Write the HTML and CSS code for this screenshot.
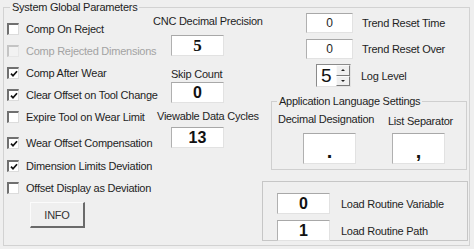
FILE: index.html
```html
<!DOCTYPE html>
<html>
<head>
<meta charset="utf-8">
<link rel="stylesheet" href="styles.css">
</head>
<body>
<div class="main">
  <div class="legend">System Global Parameters</div>
  <div class="cols">
    <div class="col1">
      <div class="cb r1"><span class="box"></span><span>Comp On Reject</span></div>
      <div class="cb disabled"><span class="box"></span><span>Comp Rejected Dimensions</span></div>
      <div class="cb"><span class="box"><svg viewBox="0 0 8 8" class="chk"><polyline points="1,3.6 3,5.8 7,1.2"/></svg></span><span>Comp After Wear</span></div>
      <div class="cb"><span class="box"><svg viewBox="0 0 8 8" class="chk"><polyline points="1,3.6 3,5.8 7,1.2"/></svg></span><span>Clear Offset on Tool Change</span></div>
      <div class="cb"><span class="box"></span><span>Expire Tool on Wear Limit</span></div>
      <div class="cb r6"><span class="box"><svg viewBox="0 0 8 8" class="chk"><polyline points="1,3.6 3,5.8 7,1.2"/></svg></span><span>Wear Offset Compensation</span></div>
      <div class="cb r7"><span class="box"><svg viewBox="0 0 8 8" class="chk"><polyline points="1,3.6 3,5.8 7,1.2"/></svg></span><span>Dimension Limits Deviation</span></div>
      <div class="cb"><span class="box"></span><span>Offset Display as Deviation</span></div>
      <div class="btn">INFO</div>
    </div>
    <div class="col2">
      <div class="lbl l-cnc">CNC Decimal Precision</div>
      <div class="tb big b1 serif">5</div>
      <div class="lbl l-skip">Skip Count</div>
      <div class="tb big b2">0</div>
      <div class="lbl l-view">Viewable Data Cycles</div>
      <div class="tb big b3">13</div>
    </div>
    <div class="col3">
      <div class="row t1"><div class="tb small">0</div><span class="rl">Trend Reset Time</span></div>
      <div class="row t2"><div class="tb small">0</div><span class="rl">Trend Reset Over</span></div>
      <div class="row t3">
        <div class="spin">
          <div class="spin-val">5</div>
          <div class="spin-btns">
            <div class="sb"><span class="up"></span></div>
            <div class="sb"><span class="down"></span></div>
          </div>
        </div>
        <span class="rl ll">Log Level</span>
      </div>
      <div class="lang">
        <div class="legend lg2">Application Language Settings</div>
        <div class="langcols">
          <div class="lc lca">
            <div class="lbl la">Decimal Designation</div>
            <div class="tb sep sa">.</div>
          </div>
          <div class="lc lcb">
            <div class="lbl lb">List Separator</div>
            <div class="tb sep sbx">,</div>
          </div>
        </div>
      </div>
      <div class="load">
        <div class="row"><div class="tb mid">0</div><span class="lr">Load Routine Variable</span></div>
        <div class="row lr2"><div class="tb mid">1</div><span class="lr">Load Routine Path</span></div>
      </div>
    </div>
  </div>
</div>
</body>
</html>
```
FILE: styles.css
```css
* { box-sizing: border-box; }
html, body { margin: 0; padding: 0; }
body {
  width: 474px;
  height: 249px;
  overflow: hidden;
  background: #efefef;
  font-family: "Liberation Sans", Arial, sans-serif;
  font-size: 11px;
  letter-spacing: -0.25px;
  color: #1e1e1e;
}
.main {
  margin: 7px 0 0 3px;
  width: 467px;
  height: 239px;
  border: 1px solid #d2d2d2;
  display: flex;
  flex-direction: column;
}
.legend {
  align-self: flex-start;
  margin: -8px 0 0 6px;
  padding: 0 2px;
  background: #efefef;
  line-height: 14px;
  white-space: nowrap;
}
.cols { display: flex; flex: 1; }
.col1 {
  width: 149px;
  flex: none;
  padding-left: 3px;
  display: flex;
  flex-direction: column;
  white-space: nowrap;
}
.cb { display: flex; align-items: center; height: 22px; }
.cb.r1 { margin-top: 4px; }
.cb.r6 { margin-top: 4px; }
.cb.r7 { margin-top: 1px; }
.cb .box {
  width: 12px;
  height: 12px;
  flex: none;
  margin-right: 7px;
  background: #fff;
  border-style: solid;
  border-width: 2px 1px 1px 2px;
  border-color: #707070 #dcdcdc #dcdcdc #707070;
  display: flex;
  align-items: center;
  justify-content: center;
}
.cb.disabled { color: #a3a3a3; }
.cb.disabled .box { background: #f2f2f2; border-color: #c4c4c4 #e6e6e6 #e6e6e6 #c4c4c4; }
.chk { width: 8px; height: 8px; }
.chk polyline { fill: none; stroke: #111; stroke-width: 1.7; }
.btn {
  margin: 3px 0 0 23px;
  width: 55px;
  height: 26px;
  border-style: solid;
  border-width: 1px 2px 2px 1px;
  border-color: #fbfbfb #6a6a6a #6a6a6a #fbfbfb;
  background: #efefef;
  display: flex;
  align-items: center;
  justify-content: center;
  color: #333;
}
.col2 {
  width: 109px;
  flex: none;
  display: flex;
  flex-direction: column;
  white-space: nowrap;
}
.lbl { line-height: 14px; white-space: nowrap; }
.tb {
  background: #fff;
  border-style: solid;
  border-width: 1px;
  border-color: #a8a8a8 #e2e2e2 #e2e2e2 #b0b0b0;
  display: flex;
  align-items: center;
  justify-content: center;
}
.big { width: 53px; height: 21px; font-weight: bold; font-size: 16px; letter-spacing: 0; color: #111; }
.serif { font-family: "Liberation Serif", "Times New Roman", serif; font-size: 17px; }
.l-cnc { margin-top: 0; }
.b1 { margin: 7px 0 0 18px; }
.l-skip { margin: 11px 0 0 18px; }
.b2 { margin: 1px 0 0 18px; }
.l-view { margin: 6px 0 0 4px; }
.b3 { margin: 4px 0 0 18px; }
.col3 { flex: 1; display: flex; flex-direction: column; }
.row { display: flex; align-items: center; white-space: nowrap; }
.small { width: 47px; height: 20px; margin-left: 44px; font-size: 12px; letter-spacing: 0; }
.rl { margin-left: 9px; }
.t1 { margin-top: -1px; }
.t2 { margin-top: 6px; }
.t3 { margin-top: 5px; }
.spin {
  margin-left: 54px;
  width: 35px;
  height: 23px;
  display: flex;
  background: #fff;
  border-style: solid;
  border-width: 1px;
  border-color: #8a8a8a #e2e2e2 #e2e2e2 #8a8a8a;
}
.spin-val { flex: 1; font-size: 19px; line-height: 21px; padding-left: 4px; letter-spacing: 0; color: #111; }
.spin-btns { width: 14px; display: flex; flex-direction: column; }
.sb {
  flex: 1;
  background: #efefef;
  border-style: solid;
  border-width: 1px;
  border-color: #fafafa #7a7a7a #7a7a7a #fafafa;
  display: flex;
  align-items: center;
  justify-content: center;
}
.up { width: 0; height: 0; border-left: 2px solid transparent; border-right: 2px solid transparent; border-bottom: 2px solid #222; }
.down { width: 0; height: 0; border-left: 2px solid transparent; border-right: 2px solid transparent; border-top: 2px solid #222; }
.ll { margin-left: 10px; }
.lang {
  margin: 14px 0 0 9px;
  width: 196px;
  height: 69px;
  border: 1px solid #cfcfcf;
  display: flex;
  flex-direction: column;
}
.lg2 { margin-left: 5px; }
.langcols { display: flex; padding-left: 6px; }
.lca { width: 110px; flex: none; display: flex; flex-direction: column; }
.lcb { display: flex; flex-direction: column; }
.la { margin-top: 4px; }
.lb { margin-top: 6px; }
.sep {
  width: 53px;
  height: 31px;
  font-weight: bold;
  font-size: 20px;
  letter-spacing: 0;
  align-items: flex-end;
  line-height: 20px;
  padding-bottom: 2px;
  color: #111;
}
.sa { margin: 7px 0 0 25px; }
.sbx { margin: 5px 0 0 4px; }
.load {
  margin-top: 11px;
  width: 206px;
  height: 60px;
  border: 1px solid #c6c6c6;
  padding: 11px 0 0 14px;
  display: flex;
  flex-direction: column;
}
.mid { width: 53px; height: 21px; font-weight: bold; font-size: 16px; letter-spacing: 0; color: #111; }
.lr { margin-left: 11px; }
.lr2 { margin-top: 6px; }
```
